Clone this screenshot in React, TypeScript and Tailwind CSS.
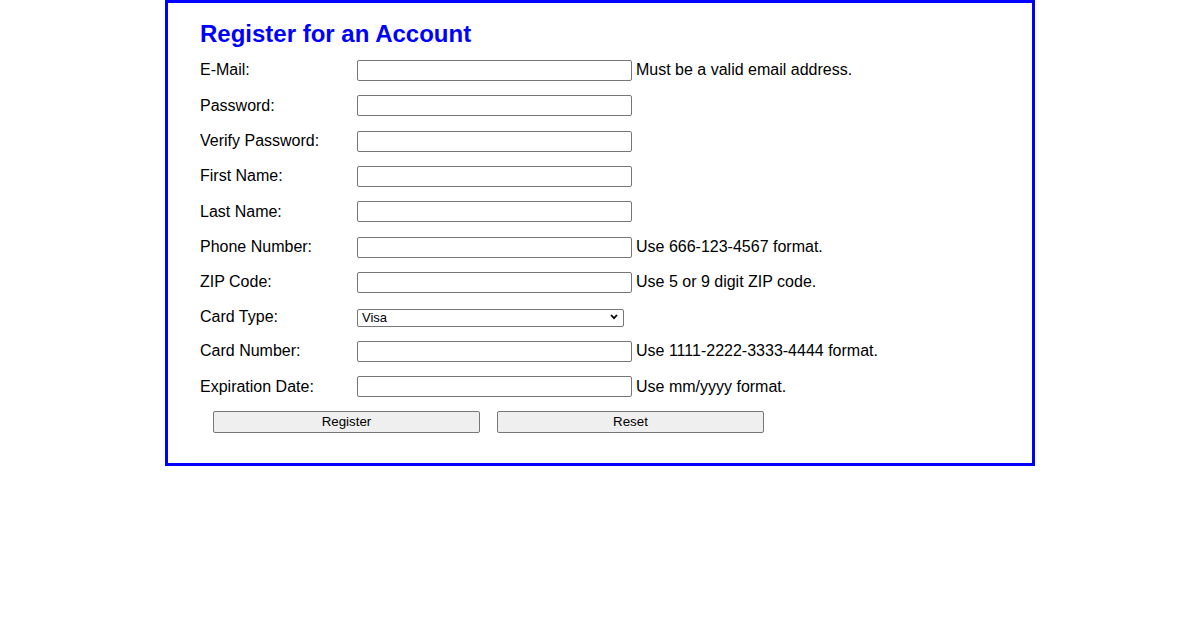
import React from "react";

const rows: { label: string; hint?: string; type?: string }[] = [
  { label: "E-Mail:", hint: "Must be a valid email address." },
  { label: "Password:", type: "password" },
  { label: "Verify Password:", type: "password" },
  { label: "First Name:" },
  { label: "Last Name:" },
  { label: "Phone Number:", hint: "Use 666-123-4567 format." },
  { label: "ZIP Code:", hint: "Use 5 or 9 digit ZIP code." },
  { label: "Card Type:", type: "select" },
  { label: "Card Number:", hint: "Use 1111-2222-3333-4444 format." },
  { label: "Expiration Date:", hint: "Use mm/yyyy format." },
];

export default function App() {
  return (
    <div className="w-full h-[630px] bg-white font-['Liberation_Sans',Arial,sans-serif] text-black">
      <div className="w-[870px] h-[466px] mx-auto border-[3px] border-[#0000ff] px-[32px]">
        <h2 className="mt-[17px] text-[24px] leading-[28px] font-bold text-[#0000ff]">
          Register for an Account
        </h2>
        <div className="mt-[4.8px] flex flex-col">
          {rows.map((r) => (
            <div
              key={r.label}
              className={
                r.type === "select"
                  ? "flex items-center h-[33.67px] text-[16px] leading-[18px]"
                  : "flex items-center h-[35.33px] text-[16px] leading-[18px]"
              }
            >
              <div className="w-[157px] shrink-0">{r.label}</div>
              {r.type === "select" ? (
                <div className="relative w-[267px] h-[18px]">
                  <select className="appearance-none w-[267px] h-[18px] border border-[#767676] rounded-[2px] bg-white text-[13px] leading-[16px] pl-[4px] font-['Liberation_Sans',Arial,sans-serif] text-black">
                    <option>Visa</option>
                    <option>MasterCard</option>
                    <option>American Express</option>
                  </select>
                  <svg
                    className="absolute right-[6px] top-[6px] pointer-events-none"
                    width="8"
                    height="6"
                    viewBox="0 0 8 6"
                  >
                    <path d="M1 1 L4 4.2 L7 1" fill="none" stroke="#000" strokeWidth="1.8" />
                  </svg>
                </div>
              ) : (
                <input
                  type={r.type === "password" ? "password" : "text"}
                  className="w-[275px] h-[21px] border border-[#767676] rounded-[2px] bg-white text-[13.33px] px-[2px]"
                />
              )}
              {r.hint && <span className="ml-[4px] whitespace-nowrap">{r.hint}</span>}
            </div>
          ))}
        </div>
        <div className="mt-[6.5px] flex pl-[13px] gap-[17px]">
          <button className="w-[267px] h-[22px] bg-[#efefef] border border-[#767676] rounded-[2px] text-[13.33px] leading-[16px] text-black">
            Register
          </button>
          <button className="w-[267px] h-[22px] bg-[#efefef] border border-[#767676] rounded-[2px] text-[13.33px] leading-[16px] text-black">
            Reset
          </button>
        </div>
      </div>
    </div>
  );
}
